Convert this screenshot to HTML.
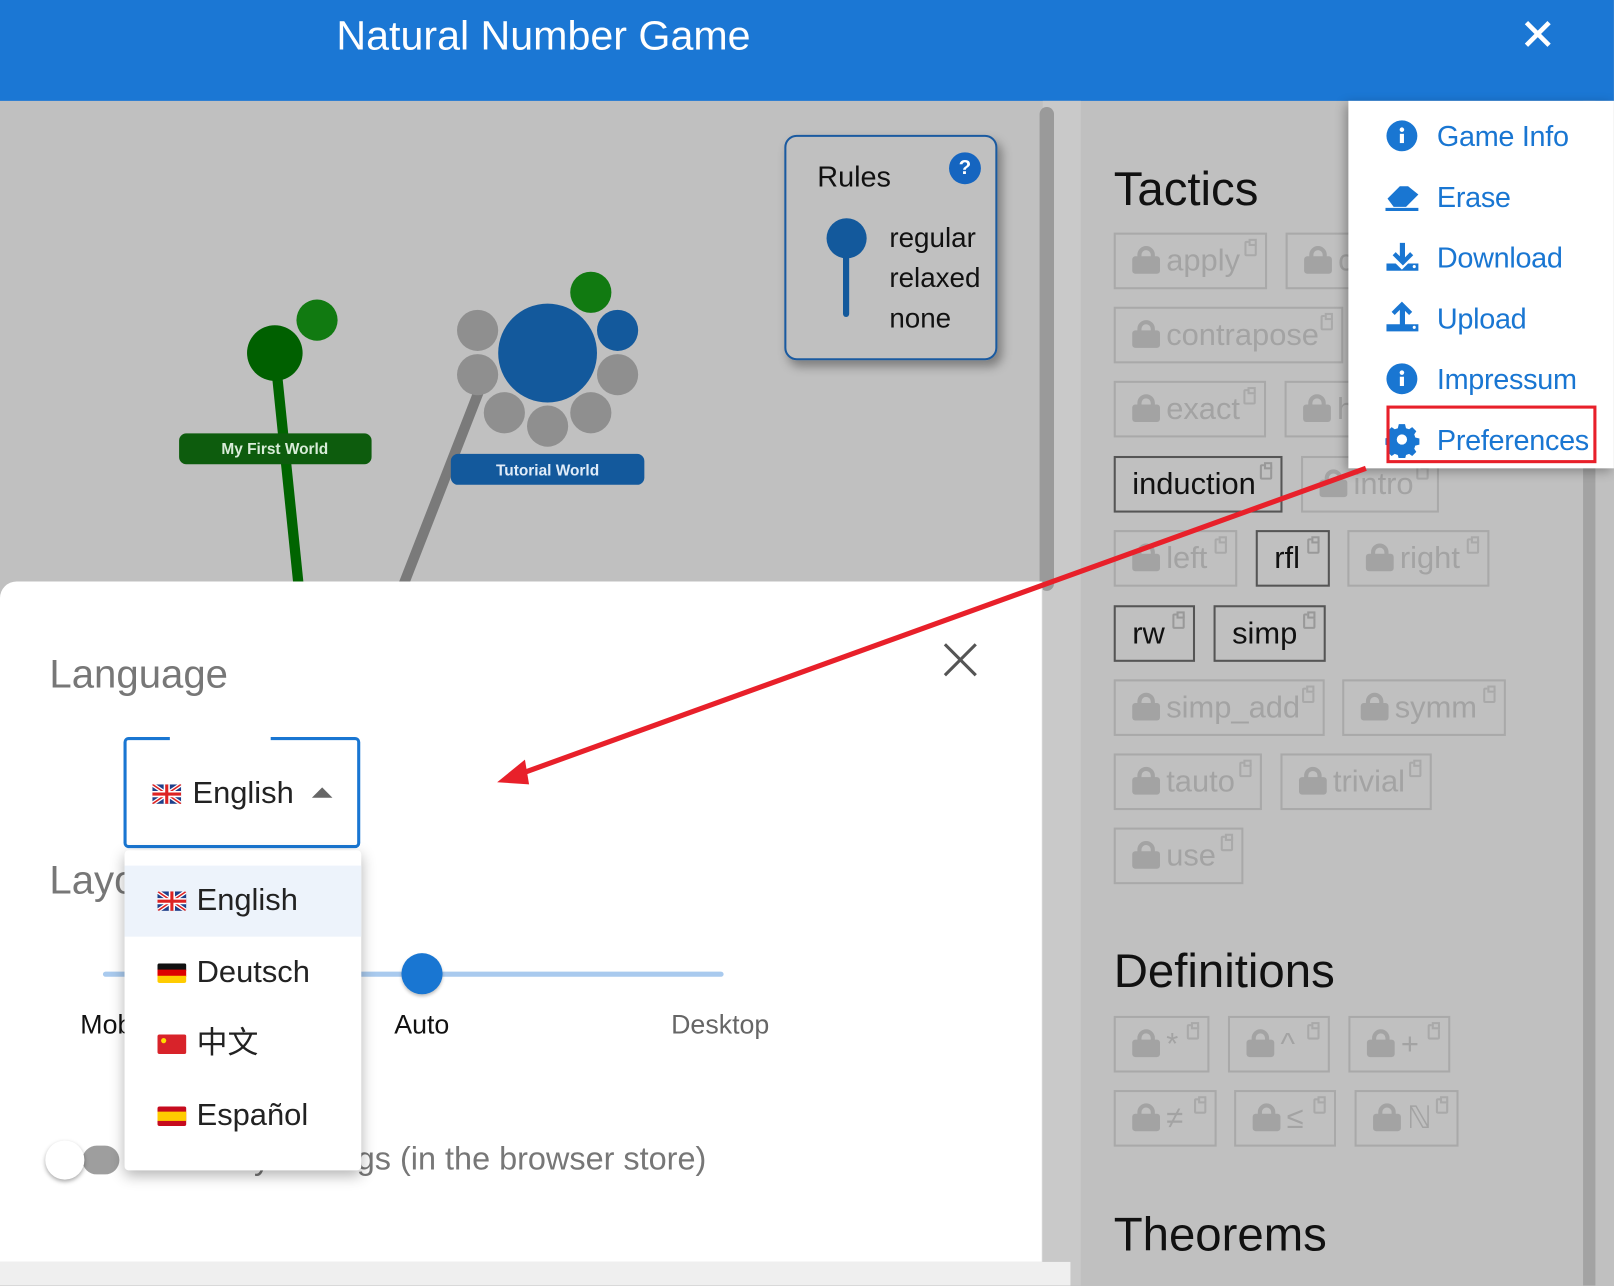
<!DOCTYPE html>
<html><head><meta charset="utf-8"><style>
*{box-sizing:border-box;margin:0;padding:0}
html,body{width:1614px;height:1286px;overflow:hidden;background:#c0c0c0;font-family:"Liberation Sans","Noto Sans CJK SC",sans-serif}
#w{position:absolute;left:0;top:0;width:1568px;height:1249px;transform:scale(1.0293);transform-origin:0 0;background:#c0c0c0;overflow:hidden}
.abs{position:absolute}
.hdr{left:0;top:0;width:1568px;height:98px;background:#1b77d4}
.t{position:absolute;white-space:nowrap;line-height:1}
.btn{position:absolute;border:2px solid #a9a9a9;height:55px;color:#a3a3a3;font-size:30px;line-height:51px;padding-left:16px;white-space:nowrap}
.btn.on{border-color:#555;color:#111}
.lk{display:inline-block;position:relative;width:27px;height:26px;vertical-align:-2px;margin-right:6px}
.lk:before{content:"";position:absolute;left:5px;top:0;width:17px;height:18px;border:4px solid #a3a3a3;border-radius:9px 9px 0 0;box-sizing:border-box}
.lk:after{content:"";position:absolute;left:0;top:10px;width:27px;height:17px;background:#a3a3a3;border-radius:3px}
.cb{position:absolute;top:6px;right:8px;width:12px;height:15px;border:2px solid #a9a9a9;border-radius:2px}
.cb:before{content:"";position:absolute;left:2px;top:-4px;width:4px;height:3px;border:2px solid #a9a9a9;background:#c0c0c0}
.on .cb,.on .cb:before{border-color:#999}
.mi{position:absolute;left:1396px;font-size:28px;color:#1976d2;line-height:1;letter-spacing:-0.3px}
.dd{position:absolute;left:191px;font-size:30px;color:#222;line-height:1}
.fl{position:absolute;left:153px;width:28px;height:19px;border-radius:2px}
</style></head><body><div id="w">
<div class="abs hdr"></div>
<div class="t" style="left:0;width:1056px;text-align:center;top:15px;font-size:40px;color:#fff">Natural Number Game</div>
<svg class="abs" style="left:1480px;top:19px" width="28" height="28"><path d="M3 3L25 25M25 3L3 25" stroke="#fff" stroke-width="4.5"/></svg>

<!-- map -->
<svg class="abs" style="left:0;top:98px" width="1010" height="470">
<line x1="267" y1="245" x2="290" y2="470" stroke="#006400" stroke-width="10"/>
<line x1="470" y1="270" x2="392" y2="470" stroke="#7a7a7a" stroke-width="10"/>
<circle cx="267" cy="245" r="27" fill="#006000"/>
<circle cx="308" cy="213" r="20" fill="#117a11"/>
<g fill="#8f8f8f"><circle cx="464" cy="223" r="20"/><circle cx="464" cy="266" r="20"/><circle cx="490" cy="303" r="20"/><circle cx="532" cy="316" r="20"/><circle cx="574" cy="303" r="20"/><circle cx="600" cy="266" r="20"/></g>
<circle cx="532" cy="245" r="48" fill="#13599c"/>
<circle cx="600" cy="223" r="20" fill="#13599c"/>
<circle cx="574" cy="186" r="20" fill="#117a11"/>
<rect x="174" y="323" width="187" height="30" rx="7" fill="#0d5c0d"/>
<text x="267" y="343" text-anchor="middle" font-family="Liberation Sans" font-weight="bold" font-size="15" fill="#d8ecd8">My First World</text>
<rect x="438" y="343" width="188" height="30" rx="7" fill="#13599c"/>
<text x="532" y="364" text-anchor="middle" font-family="Liberation Sans" font-weight="bold" font-size="15" fill="#e0ecf8">Tutorial World</text>
</svg>
<div class="abs" style="left:1013px;top:98px;width:37px;height:1151px;background:#c9c9c9"></div>
<div class="abs" style="left:1010px;top:104px;width:14px;height:470px;background:#9a9a9a;border-radius:7px"></div>
<div class="abs" style="left:1538px;top:98px;width:12px;height:1151px;background:#a3a3a3"></div>

<!-- rules -->
<div class="abs" style="left:762px;top:131px;width:207px;height:219px;border:2px solid #1a5aa0;border-radius:12px;box-shadow:4px 6px 10px rgba(0,0,0,.35)"></div>
<div class="t" style="left:794px;top:158px;font-size:28px;color:#111">Rules</div>
<div class="abs" style="left:922px;top:148px;width:31px;height:31px;border-radius:50%;background:#1565c0;color:#fff;font-weight:bold;font-size:20px;text-align:center;line-height:31px">?</div>
<div class="abs" style="left:819px;top:231px;width:6px;height:77px;background:#13599c;border-radius:3px"></div>
<div class="abs" style="left:803px;top:212px;width:39px;height:39px;border-radius:50%;background:#13599c"></div>
<div class="t" style="left:864px;top:212px;font-size:27px;color:#111;line-height:39px">regular<br>relaxed<br>none</div>

<!-- right panel -->
<div class="t" style="left:1082px;top:160px;font-size:46px;color:#111">Tactics</div>
<div class="btn" style="left:1082px;top:226px;width:149px"><span class="lk"></span>apply<i class="cb"></i></div>
<div class="btn" style="left:1249px;top:226px;width:140px"><span class="lk"></span>c<i class="cb"></i></div>
<div class="btn" style="left:1082px;top:298px;width:223px"><span class="lk"></span>contrapose<i class="cb"></i></div>
<div class="btn" style="left:1082px;top:370px;width:148px"><span class="lk"></span>exact<i class="cb"></i></div>
<div class="btn" style="left:1248px;top:370px;width:140px"><span class="lk"></span>h<i class="cb"></i></div>
<div class="btn on" style="left:1082px;top:443px;width:164px">induction<i class="cb"></i></div>
<div class="btn" style="left:1264px;top:443px;width:134px"><span class="lk"></span>intro<i class="cb"></i></div>
<div class="btn" style="left:1082px;top:515px;width:120px"><span class="lk"></span>left<i class="cb"></i></div>
<div class="btn on" style="left:1220px;top:515px;width:72px">rfl<i class="cb"></i></div>
<div class="btn" style="left:1309px;top:515px;width:138px"><span class="lk"></span>right<i class="cb"></i></div>
<div class="btn on" style="left:1082px;top:588px;width:79px">rw<i class="cb"></i></div>
<div class="btn on" style="left:1179px;top:588px;width:109px">simp<i class="cb"></i></div>
<div class="btn" style="left:1082px;top:660px;width:205px"><span class="lk"></span>simp_add<i class="cb"></i></div>
<div class="btn" style="left:1304px;top:660px;width:159px"><span class="lk"></span>symm<i class="cb"></i></div>
<div class="btn" style="left:1082px;top:732px;width:144px"><span class="lk"></span>tauto<i class="cb"></i></div>
<div class="btn" style="left:1244px;top:732px;width:147px"><span class="lk"></span>trivial<i class="cb"></i></div>
<div class="btn" style="left:1082px;top:804px;width:126px"><span class="lk"></span>use<i class="cb"></i></div>
<div class="t" style="left:1082px;top:920px;font-size:46px;color:#111">Definitions</div>
<div class="btn" style="left:1082px;top:987px;width:93px"><span class="lk"></span>*<i class="cb"></i></div>
<div class="btn" style="left:1193px;top:987px;width:99px"><span class="lk"></span>^<i class="cb"></i></div>
<div class="btn" style="left:1310px;top:987px;width:99px"><span class="lk"></span>+<i class="cb"></i></div>
<div class="btn" style="left:1082px;top:1059px;width:100px"><span class="lk"></span>≠<i class="cb"></i></div>
<div class="btn" style="left:1199px;top:1059px;width:99px"><span class="lk"></span>≤<i class="cb"></i></div>
<div class="btn" style="left:1316px;top:1059px;width:101px"><span class="lk"></span>ℕ<i class="cb"></i></div>
<div class="t" style="left:1082px;top:1176px;font-size:46px;color:#111">Theorems</div>

<!-- menu -->
<div class="abs" style="left:1310px;top:98px;width:258px;height:357px;background:#fff;box-shadow:-3px 3px 10px rgba(0,0,0,.3)"></div>
<svg class="abs" style="left:1346px;top:115px" width="34" height="330">
<g fill="#1976d2">
<circle cx="16" cy="17" r="15"/><circle cx="16" cy="253" r="15"/>
<path d="M2 78l12-12h8l10 8-12 12H8zM0 87h32v3H0z"/>
<path d="M14 121h5v14l5-5 3 3-10 10-10-10 3-3 4 4zM1 141h9l6 6 6-6h10v7H1z"/>
<path d="M14 200v-14l-5 5-3-3 10-10 10 10-3 3-4-4v13zM1 200h9l6 0 6 0h10v7H1z"/>
<path d="M13 297h6l1 4 3 1 3-2 4 4-2 3 1 3 4 1v6l-4 1-1 3 2 3-4 4-3-2-3 1-1 4h-6l-1-4-3-1-3 2-4-4 2-3-1-3-4-1v-6l4-1 1-3-2-3 4-4 3 2 3-1z"/>
</g>
<g fill="#fff"><rect x="14" y="15" width="4" height="9"/><circle cx="16" cy="11" r="2.2"/><rect x="14" y="251" width="4" height="9"/><circle cx="16" cy="247" r="2.2"/><circle cx="16" cy="312" r="5"/><circle cx="28" cy="144" r="1.5"/><circle cx="28" cy="203" r="1.5"/></g>
</svg>
<div class="mi" style="top:119px">Game Info</div>
<div class="mi" style="top:178px">Erase</div>
<div class="mi" style="top:237px">Download</div>
<div class="mi" style="top:296px">Upload</div>
<div class="mi" style="top:355px">Impressum</div>
<div class="mi" style="top:414px">Preferences</div>
<div class="abs" style="left:1347px;top:394px;width:204px;height:56px;border:3px solid #e8202a"></div>

<!-- dialog -->
<div class="abs" style="left:0;top:565px;width:1013px;height:661px;background:#fff;border-radius:16px 0 0 0;border-right:1px solid #ddd"></div>
<div class="abs" style="left:0;top:1226px;width:1040px;height:23px;background:#efefef"></div>
<div class="t" style="left:48px;top:636px;font-size:39px;color:#777">Language</div>
<svg class="abs" style="left:916px;top:624px" width="34" height="34"><path d="M2 2L32 32M32 2L2 32" stroke="#555" stroke-width="3"/></svg>
<div class="t" style="left:48px;top:836px;font-size:39px;color:#777">Layout</div>
<div class="abs" style="left:100px;top:944px;width:603px;height:5px;background:#a9caee;border-radius:3px"></div>
<div class="abs" style="left:390px;top:926px;width:40px;height:40px;border-radius:50%;background:#1976d2;box-shadow:0 2px 3px rgba(0,0,0,.25)"></div>
<div class="t" style="left:78px;top:982px;font-size:26px;color:#111">Mobile</div>
<div class="t" style="left:383px;top:982px;font-size:26px;color:#111">Auto</div>
<div class="t" style="left:652px;top:982px;font-size:26px;color:#666">Desktop</div>
<div class="abs" style="left:80px;top:1113px;width:36px;height:28px;border-radius:14px;background:#9e9e9e"></div>
<div class="abs" style="left:44px;top:1108px;width:38px;height:38px;border-radius:50%;background:#fff;box-shadow:0 2px 4px rgba(0,0,0,.35)"></div>
<div class="t" style="left:140px;top:1110px;font-size:31.5px;color:#777">Save my settings (in the browser store)</div>

<!-- select -->
<div class="abs" style="left:120px;top:716px;width:230px;height:108px;border:3px solid #1976d2;border-radius:5px"></div>
<div class="abs" style="left:165px;top:714px;width:98px;height:6px;background:#fff"></div>
<svg class="abs" style="left:148px;top:762px" width="28" height="19"><rect width="28" height="19" fill="#1f3f8a"/><path d="M0 0L28 19M28 0L0 19" stroke="#fff" stroke-width="4"/><path d="M0 0L28 19M28 0L0 19" stroke="#d22" stroke-width="1.5"/><path d="M14 0V19M0 9.5H28" stroke="#fff" stroke-width="6"/><path d="M14 0V19M0 9.5H28" stroke="#d22" stroke-width="3"/></svg>
<div class="t" style="left:187px;top:756px;font-size:30px;color:#222">English</div>
<svg class="abs" style="left:303px;top:764px" width="20" height="12"><path d="M0 11L10 1L20 11Z" fill="#666"/></svg>

<!-- dropdown -->
<div class="abs" style="left:121px;top:826px;width:230px;height:311px;background:#fff;border-radius:4px;box-shadow:0 5px 14px rgba(0,0,0,.3)"></div>
<div class="abs" style="left:121px;top:841px;width:230px;height:69px;background:#edf3fb"></div>
<svg class="fl" style="top:866px" width="28" height="19"><rect width="28" height="19" fill="#1f3f8a"/><path d="M0 0L28 19M28 0L0 19" stroke="#fff" stroke-width="4"/><path d="M0 0L28 19M28 0L0 19" stroke="#d22" stroke-width="1.5"/><path d="M14 0V19M0 9.5H28" stroke="#fff" stroke-width="6"/><path d="M14 0V19M0 9.5H28" stroke="#d22" stroke-width="3"/></svg>
<div class="dd" style="top:860px">English</div>
<svg class="fl" style="top:936px" width="28" height="19"><rect width="28" height="7" fill="#111"/><rect y="6" width="28" height="7" fill="#d00"/><rect y="12" width="28" height="7" fill="#fc0"/></svg>
<div class="dd" style="top:930px">Deutsch</div>
<svg class="fl" style="top:1005px" width="28" height="19"><rect width="28" height="19" fill="#d8232a"/><circle cx="6" cy="6" r="2.5" fill="#fd0"/></svg>
<div class="dd" style="top:999px">中文</div>
<svg class="fl" style="top:1075px" width="28" height="19"><rect width="28" height="19" fill="#c60b1e"/><rect y="5" width="28" height="9" fill="#fc0"/></svg>
<div class="dd" style="top:1069px">Español</div>

<!-- arrow -->
<svg class="abs" style="left:0;top:0" width="1568" height="1249"><line x1="1327" y1="455" x2="505" y2="752" stroke="#e8202a" stroke-width="5"/><path d="M483 760L510 738L514 762Z" fill="#e8202a"/></svg>
</div></body></html>
